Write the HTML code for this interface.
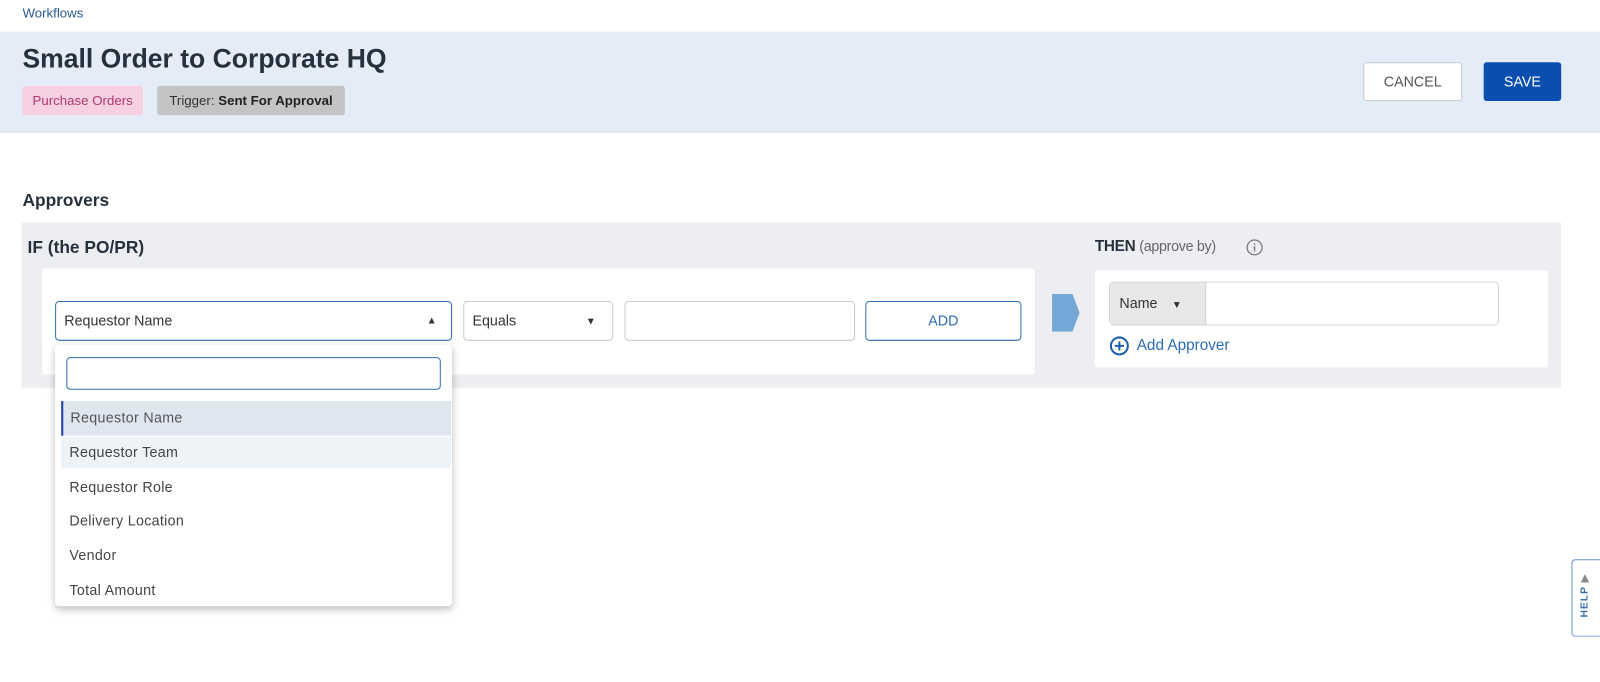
<!DOCTYPE html>
<html><head><style>
*{box-sizing:border-box;margin:0;padding:0}
body{width:1600px;height:681px;background:#fff;font-family:"Liberation Sans",sans-serif;position:relative;overflow:hidden;color:#333}
#w{position:absolute;left:0;top:0;width:1568px;height:668px;transform:scale(1.0204);transform-origin:0 0}
.a{position:absolute}
</style></head><body><div id="w">
<div class="a" style="left:22px;top:5px;font-size:13px;color:#2a5a93">Workflows</div>
<div class="a" style="left:0;top:31px;width:1568px;height:99px;background:#e4edf7;border-bottom:1px solid #d6dde6"></div>
<div class="a" style="left:22px;top:42px;font-size:26px;font-weight:bold;color:#27313d">Small Order to Corporate HQ</div>
<div class="a" style="left:22px;top:84px;width:118px;height:29px;background:#f6cfe1;border-radius:3px;color:#b03a72;font-size:13px;line-height:29px;text-align:center">Purchase Orders</div>
<div class="a" style="left:154px;top:84px;width:184px;height:29px;background:#c4c4c4;border-radius:3px;color:#333;font-size:13px;line-height:29px;text-align:center">Trigger: <b style="color:#222">Sent For Approval</b></div>
<div class="a" style="left:1336px;top:61px;width:97px;height:38px;background:#fff;border:1px solid #c8ccd0;border-radius:3px;font-size:14px;line-height:36px;text-align:center;color:#555">CANCEL</div>
<div class="a" style="left:1454px;top:61px;width:76px;height:38px;background:#0a4fb0;border-radius:3px;font-size:14px;line-height:38px;text-align:center;color:#fff">SAVE</div>
<div class="a" style="left:22px;top:187px;font-size:17px;font-weight:bold;color:#27313d">Approvers</div>
<div class="a" style="left:21px;top:218px;width:1509px;height:162px;background:#edeef2"></div>
<div class="a" style="left:27px;top:233px;font-size:17px;font-weight:bold;color:#27313d">IF (the PO/PR)</div>
<div class="a" style="left:41px;top:263px;width:973px;height:104px;background:#fff;border-radius:3px"></div>
<div class="a" style="left:54px;top:295px;width:389px;height:39px;border:1px solid #2d6db5;border-radius:4px;font-size:14px;line-height:37px;padding-left:8px;color:#333">Requestor Name<span class="a" style="right:14px;top:0;font-size:10px">▲</span></div>
<div class="a" style="left:454px;top:295px;width:147px;height:39px;border:1px solid #c8ccd0;border-radius:4px;font-size:14px;line-height:37px;padding-left:8px">Equals<span class="a" style="right:16px;top:1px;font-size:10px">▼</span></div>
<div class="a" style="left:612px;top:295px;width:226px;height:39px;border:1px solid #c8ccd0;border-radius:4px"></div>
<div class="a" style="left:848px;top:295px;width:153px;height:39px;border:1px solid #2d6db5;border-radius:4px;font-size:14px;line-height:37px;text-align:center;color:#2d6db5">ADD</div>
<svg class="a" style="left:1031px;top:288px" width="28" height="37"><polygon points="0,0 20,0 27,18.5 20,37 0,37" fill="#74a8d8"/></svg>
<div class="a" style="left:1073px;top:233px;font-size:15px;color:#27313d;letter-spacing:-0.3px"><b>THEN</b> <span style="font-size:14px;color:#666">(approve by)</span></div>
<svg class="a" style="left:1221px;top:234px" width="17" height="17"><circle cx="8.5" cy="8.5" r="7.3" fill="none" stroke="#777" stroke-width="1.2"/><rect x="7.8" y="7.3" width="1.4" height="5" fill="#777"/><rect x="7.8" y="4.5" width="1.4" height="1.4" fill="#777"/></svg>
<div class="a" style="left:1073px;top:265px;width:444px;height:95px;background:#fff;border-radius:3px"></div>
<div class="a" style="left:1087px;top:276px;width:382px;height:43px;border:1px solid #d0d3d7;border-radius:4px;background:#fff"></div>
<div class="a" style="left:1088px;top:277px;width:94px;height:41px;background:#e8e8e8;border-right:1px solid #d0d3d7;font-size:14px;line-height:41px;padding-left:9px;color:#333">Name<span style="font-size:10px;margin-left:14px">▼</span></div>
<svg class="a" style="left:1087px;top:329px" width="20" height="20"><circle cx="10" cy="10" r="8.3" fill="none" stroke="#1b5fb0" stroke-width="2"/><path d="M10 5.5v9M5.5 10h9" stroke="#1b5fb0" stroke-width="2"/></svg>
<div class="a" style="left:1114px;top:330px;font-size:15px;color:#2d6db5">Add Approver</div>
<div class="a" style="left:54px;top:338px;width:389px;height:256px;background:#fff;border-radius:4px;box-shadow:0 3px 8px rgba(0,0,0,.25)"></div>
<div class="a" style="left:65px;top:350px;width:367px;height:32px;border:1px solid #2d6db5;border-radius:4px"></div>
<div class="a" style="left:60px;top:393px;width:382px;height:34px;background:#dfe6ef;border-left:2px solid #1a3fa8"></div>
<div class="a" style="left:60px;top:428px;width:382px;height:31px;background:#eef3f8"></div>
<div class="a" style="left:69px;top:401px;font-size:14px;color:#555;letter-spacing:.3px">Requestor Name</div>
<div class="a" style="left:68px;top:435px;font-size:14px;color:#444;letter-spacing:.3px">Requestor Team</div>
<div class="a" style="left:68px;top:469px;font-size:14px;color:#444;letter-spacing:.3px">Requestor Role</div>
<div class="a" style="left:68px;top:502px;font-size:14px;color:#444;letter-spacing:.3px">Delivery Location</div>
<div class="a" style="left:68px;top:536px;font-size:14px;color:#444;letter-spacing:.3px">Vendor</div>
<div class="a" style="left:68px;top:570px;font-size:14px;color:#444;letter-spacing:.3px">Total Amount</div>
<div class="a" style="left:1540px;top:548px;width:40px;height:76px;border:1px solid #5b8fc8;border-right:none;border-radius:4px 0 0 4px;background:#fff"></div>
<div class="a" style="left:1532px;top:578px;transform:rotate(-90deg);font-size:10px;font-weight:bold;color:#3a6fae;letter-spacing:1px;white-space:nowrap">HELP <span style="color:#888">▶</span></div>
</div></body></html>
